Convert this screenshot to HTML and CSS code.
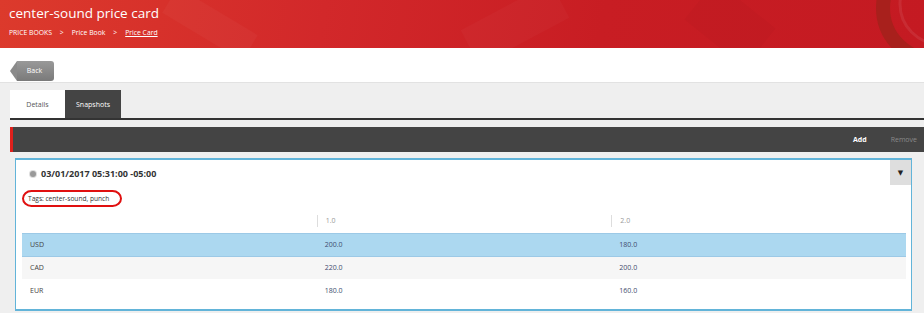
FILE: index.html
```html
<!DOCTYPE html>
<html lang="en">
<head>
    <meta charset="UTF-8">
    <meta name="viewport" content="width=device-width, initial-scale=1.0">
    <title>center-sound price card</title>
    <link rel="stylesheet" href="styles.css">
</head>
<body>
    <header class="page-header">
        <svg class="header-art" width="924" height="48" viewBox="0 0 924 48">
            <path d="M170 0 L250 48" stroke="rgba(255,255,255,0.03)" stroke-width="30" fill="none"/>
            <path d="M560 0 L470 48" stroke="rgba(255,255,255,0.025)" stroke-width="40" fill="none"/>
            <path d="M700 0 L760 48" stroke="rgba(0,0,0,0.02)" stroke-width="50" fill="none"/>
            <circle cx="935" cy="8" r="52" stroke="#a8201c" stroke-width="14" fill="none"/>
            <circle cx="940" cy="4" r="40" stroke="rgba(255,255,255,0.08)" stroke-width="3" fill="none"/>
        </svg>
        <h1 class="page-title">center-sound price card</h1>
        <nav class="breadcrumb">
            <a href="#">PRICE BOOKS</a>
            <span class="sep">&gt;</span>
            <a href="#">Price Book</a>
            <span class="sep">&gt;</span>
            <a href="#" class="current">Price Card</a>
        </nav>
    </header>

    <div class="toolbar">
        <a href="#" class="back-btn">Back</a>
    </div>

    <main class="content">
        <div class="tabs">
            <a href="#" class="tab">Details</a>
            <a href="#" class="tab active">Snapshots</a>
        </div>

        <div class="action-bar">
            <a href="#" class="action">Add</a>
            <a href="#" class="action disabled">Remove</a>
        </div>

        <section class="snapshot">
            <div class="snap-head">
                <span class="radio"></span>
                <span class="snap-date">03/01/2017 05:31:00 -05:00</span>
                <button class="toggle">&#9660;</button>
            </div>
            <div class="tags">Tags: center-sound, punch</div>

            <table class="price-table">
                <thead>
                    <tr>
                        <th></th>
                        <th>1.0</th>
                        <th>2.0</th>
                    </tr>
                </thead>
                <tbody>
                    <tr class="selected">
                        <td>USD</td>
                        <td class="num">200.0</td>
                        <td class="num">180.0</td>
                    </tr>
                    <tr class="alt">
                        <td>CAD</td>
                        <td class="num">220.0</td>
                        <td class="num">200.0</td>
                    </tr>
                    <tr>
                        <td>EUR</td>
                        <td class="num">180.0</td>
                        <td class="num">160.0</td>
                    </tr>
                </tbody>
            </table>
        </section>
    </main>
</body>
</html>
```

FILE: styles.css
```css
:root {
    --red: #d42a26;
    --dark: #444444;
    --blue-border: #62b4d9;
    --row-blue: #acd8f0;
}

* {
    margin: 0;
    padding: 0;
    box-sizing: border-box;
}

body {
    font-family: 'Open Sans', 'Liberation Sans', sans-serif;
    background-color: #efefef;
    color: #333;
    width: 924px;
    overflow: hidden;
}

a {
    text-decoration: none;
    color: inherit;
}

.page-header {
    position: relative;
    height: 48px;
    padding: 3px 9px 0;
    background: linear-gradient(100deg, #dc3a2c 0%, #d2282a 35%, #c81d23 65%, #c41a22 100%);
    color: #fff;
    overflow: hidden;
}

.header-art {
    position: absolute;
    top: 0;
    left: 0;
}

.page-title {
    position: relative;
    font-size: 13.5px;
    font-weight: normal;
    line-height: 20px;
}

.breadcrumb {
    position: relative;
    margin-top: 5px;
    font-size: 6.8px;
    display: flex;
    gap: 8px;
}

.breadcrumb .current {
    text-decoration: underline;
}

.toolbar {
    height: 35px;
    background-color: #fff;
    border-bottom: 1px solid #e2e2e2;
    padding: 8px 0 0 17px;
}

.back-btn {
    position: relative;
    display: inline-block;
    width: 37px;
    height: 20px;
    line-height: 20px;
    padding-right: 2px;
    text-align: center;
    font-size: 7px;
    color: #fff;
    background: linear-gradient(#999, #7a7a7a);
    border-radius: 0 3px 3px 0;
}

.back-btn::before {
    content: '';
    position: absolute;
    left: -7px;
    top: 0;
    border-top: 10px solid transparent;
    border-bottom: 10px solid transparent;
    border-right: 7px solid #8a8a8a;
}

.content {
    padding: 7px 0 0 10px;
}

.tabs {
    display: flex;
    border-bottom: 2px solid #333;
}

.tab {
    display: flex;
    align-items: center;
    justify-content: center;
    height: 28px;
    width: 55px;
    font-size: 7px;
    color: #555;
    background-color: #fff;
}

.tab.active {
    width: 56px;
    color: #fff;
    background-color: var(--dark);
}

.action-bar {
    margin-top: 7px;
    height: 25px;
    background-color: var(--dark);
    border-left: 3px solid #e0201c;
    display: flex;
    justify-content: flex-end;
    align-items: center;
    gap: 24px;
    padding-right: 7px;
    font-size: 7px;
}

.action {
    color: #fff;
    font-weight: bold;
}

.action.disabled {
    color: #8a8a8a;
    font-weight: normal;
}

.snapshot {
    margin: 6px 12px 0 5px;
    height: 153px;
    background-color: #fff;
    border: 1px solid var(--blue-border);
    border-top-width: 2px;
    border-bottom-width: 2px;
}

.snap-head {
    display: flex;
    align-items: flex-start;
    height: 26px;
    padding-left: 14px;
}

.radio {
    width: 6px;
    height: 6px;
    margin-top: 11px;
    border-radius: 50%;
    background-color: #999;
    box-shadow: 0 0 0 1px #ddd;
}

.snap-date {
    margin-left: 5px;
    margin-top: 7px;
    font-size: 9px;
    font-weight: bold;
    color: #333;
}

.toggle {
    margin-left: auto;
    width: 21px;
    height: 25px;
    border: none;
    background-color: #dedede;
    font-size: 7px;
    color: #222;
    font-family: 'DejaVu Sans', sans-serif;
}

.tags {
    display: inline-block;
    margin: 0 0 0 6px;
    padding: 2px 11px 2px 4px;
    font-size: 6.6px;
    color: #333;
    border: 2px solid #e01010;
    border-radius: 10px / 9px;
    transform: translateY(-2px);
}

.price-table {
    margin: 3px 5px 0 6px;
    width: 884px;
    border-collapse: collapse;
    font-size: 7px;
    table-layout: fixed;
}

.price-table th {
    height: 21px;
    padding: 0 9px 3px;
    font-weight: normal;
    color: #999;
    text-align: left;
    vertical-align: middle;
}

.price-table th + th {
    background: linear-gradient(#ddd, #ddd) left 3px / 1px 12px no-repeat;
}

.price-table td {
    height: 23px;
    padding: 0 8px;
    color: #444;
}

.price-table td.num {
    color: #3e4c6e;
}

.price-table tr.selected td {
    background-color: var(--row-blue);
    border-top: 1px solid #9cc9e6;
    border-bottom: 1px solid #9cc9e6;
}

.price-table tr.alt td {
    background-color: #f6f6f6;
}
```
